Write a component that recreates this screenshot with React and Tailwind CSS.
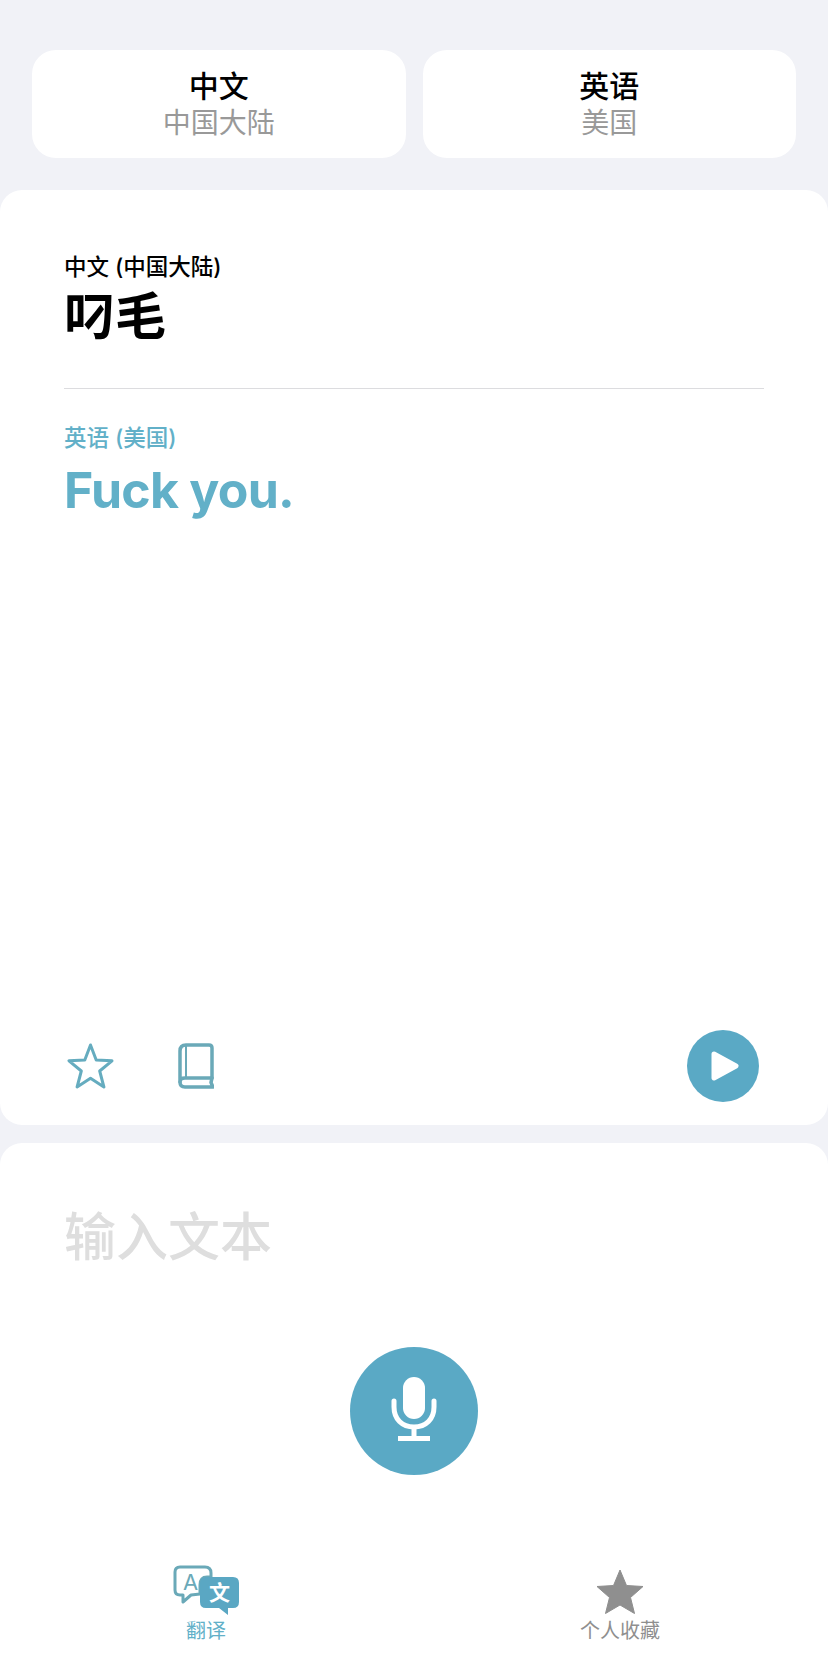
const FONT = "font-['Inter','Noto_Sans_CJK_SC',sans-serif]"

function LangCard({ name, region }) {
  return (
    <button type="button" className="flex h-[108px] flex-col items-center justify-center gap-[2px] rounded-[24px] bg-white pt-[1px]">
      <span className="text-[30px] font-medium leading-[35px] text-black">{name}</span>
      <span className="text-[28px] leading-[35px] text-[#999999]">{region}</span>
    </button>
  )
}

function StarOutline() {
  return (
    <svg width="47" height="46" viewBox="0 0 47 46" fill="none" stroke="#65acbf" strokeWidth="3" strokeLinejoin="round">
      <path d="M23.5 2 L29.2 17 L45 17.8 L32.7 28 L36.9 44 L23.5 35.2 L10.1 44 L14.3 28 L2 17.8 L17.8 17 Z" />
    </svg>
  )
}

function BookIcon() {
  return (
    <svg width="36" height="46" viewBox="0 0 36 46" fill="none" stroke="#6aa9b8" strokeWidth="3.5" strokeLinejoin="round" strokeLinecap="round">
      <path d="M8 2 H31 Q34 2 34 5 V35 H7 Q2 35 2 39 V8 Q2 2 8 2 Z" />
      <path d="M8 2 V35" strokeWidth="2" />
      <path d="M2 39 Q2 44 7 44 H35 L33 39.5 L34 35" />
    </svg>
  )
}

function MicIcon() {
  return (
    <svg width="46" height="64" viewBox="0 0 46 64" fill="none" className="mb-[4px]">
      <rect x="12" y="0" width="22" height="42" rx="11" fill="white" />
      <path d="M3 24 V30 C3 42 11 50 23 50 C35 50 43 42 43 30 V24" stroke="white" strokeWidth="5" strokeLinecap="round" />
      <path d="M23 50 V61 M7 61.5 H39" stroke="white" strokeWidth="5" />
    </svg>
  )
}

function TranslateIcon() {
  return (
    <svg width="66" height="50" viewBox="0 0 66 50" fill="none">
      <path d="M7 2 H32 Q38 2 38 8 V12 H34 Q27 12 27 20 V29 L18 30 L10 37 V30 H7 Q2 30 2 25 V7 Q2 2 7 2 Z" stroke="#6aa9b8" strokeWidth="3" strokeLinejoin="round" />
      <text x="10" y="25" fontSize="22" fill="#6aa9b8" fontFamily="Inter, sans-serif">A</text>
      <path d="M33 12 H60 Q66 12 66 18 V37 Q66 43 60 43 H55 V50 L46 43 H33 Q27 43 27 37 V18 Q27 12 33 12 Z" fill="#5aa7c3" />
      <text x="46.5" y="35" fontSize="21" fontWeight="700" fill="white" textAnchor="middle" fontFamily="'Noto Sans CJK SC', sans-serif">文</text>
    </svg>
  )
}

function TabItem({ icon, label, color }) {
  return (
    <div className="flex w-[120px] flex-col items-center">
      <div className="flex h-[48px] items-end">{icon}</div>
      <span className={`mt-[3px] text-[20px] leading-[26px] ${color}`}>{label}</span>
    </div>
  )
}

export default function App() {
  return (
    <div className={`flex h-[1654px] w-[828px] flex-col overflow-hidden bg-[#f1f2f7] ${FONT}`}>
      <div className="grid shrink-0 grid-cols-2 gap-[17px] px-[32px] pt-[50px]">
        <LangCard name="中文" region="中国大陆" />
        <LangCard name="英语" region="美国" />
      </div>

      <section className="mt-[32px] flex h-[935px] shrink-0 flex-col rounded-[22px] bg-white px-[64px]">
        <div className="flex h-[199px] flex-col border-b border-[#dcdcdf] pt-[62px]">
          <p className="text-[22.5px] font-medium leading-[30px] text-black">中文 (中国大陆)</p>
          <p className="mt-[5px] text-[51px] font-semibold leading-[60px] text-black">叼毛</p>
        </div>
        <p className="mt-[34px] text-[22.5px] font-medium leading-[30px] text-[#62b0c8]">英语 (美国)</p>
        <p className="mt-[7px] text-[50px] font-bold leading-[60px] tracking-[-0.75px] text-[#62b0c8]">Fuck you.</p>

        <div className="mt-auto mb-[23px] flex items-center">
          <div className="ml-[3px]">
            <StarOutline />
          </div>
          <div className="ml-[64px]">
            <BookIcon />
          </div>
          <button type="button" className="ml-auto mr-[5px] flex h-[72px] w-[72px] items-center justify-center rounded-full bg-[#5aa9c5]">
            <svg width="30" height="32" viewBox="0 0 30 32" className="ml-[4px]">
              <path d="M4 4 L26 16 L4 28 Z" fill="white" stroke="white" strokeWidth="5" strokeLinejoin="round" />
            </svg>
          </button>
        </div>
      </section>

      <section className="mt-[18px] flex flex-1 flex-col rounded-t-[22px] bg-white px-[64px]">
        <p className="mt-[63px] text-[52px] font-medium leading-[64px] text-[#dedede]">输入文本</p>
        <button type="button" className="mx-auto mt-[77px] flex h-[128px] w-[128px] items-center justify-center rounded-full bg-[#5aa9c5]">
          <MicIcon />
        </button>
        <nav className="mt-[92px] ml-[82px] flex w-[534px] justify-between">
          <TabItem icon={<TranslateIcon />} label="翻译" color="text-[#62b0c8]" />
          <TabItem
            icon={
              <svg width="48" height="46" viewBox="0 0 48 46">
                <path d="M24 1 L30.5 16.5 L47 17.5 L34.5 28.5 L38.5 44.5 L24 36 L9.5 44.5 L13.5 28.5 L1 17.5 L17.5 16.5 Z" fill="#8f8f8f" stroke="#8f8f8f" strokeLinejoin="round" />
              </svg>
            }
            label="个人收藏"
            color="text-[#8f8f8f]"
          />
        </nav>
      </section>
    </div>
  )
}
